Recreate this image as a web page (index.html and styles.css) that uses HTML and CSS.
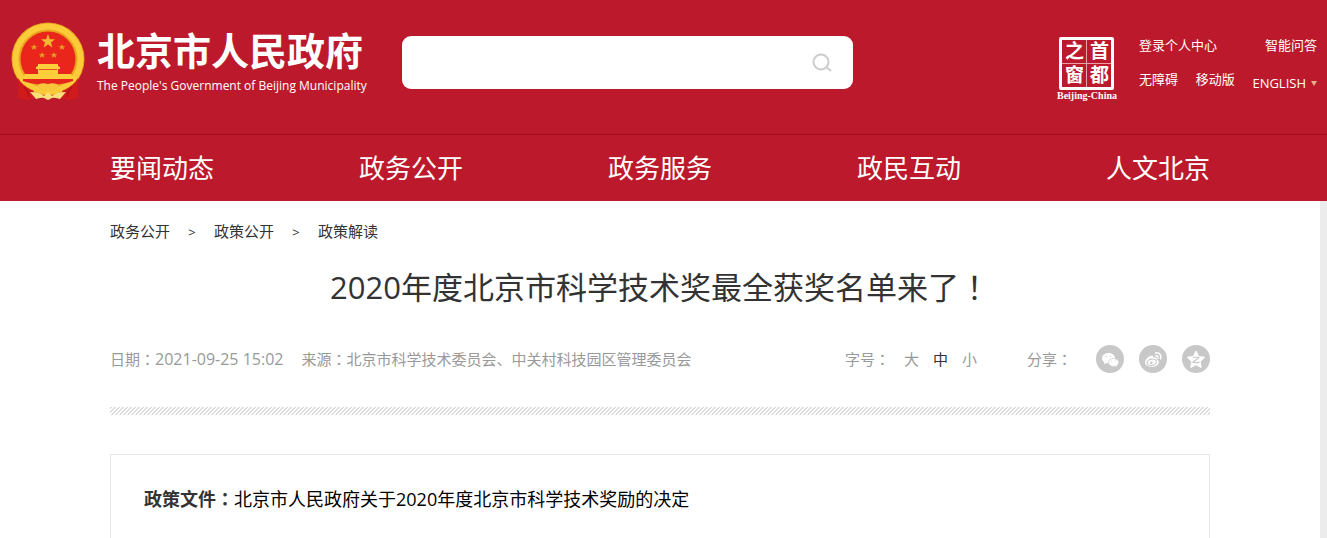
FILE: index.html
```html
<!DOCTYPE html>
<html lang="zh-CN">
<head>
    <meta charset="UTF-8">
    <meta name="viewport" content="width=device-width, initial-scale=1">
    <title>2020年度北京市科学技术奖最全获奖名单来了！</title>
    <link rel="stylesheet" href="styles.css">
</head>
<body>
    <header class="header">
        <div class="header-top">
            <a class="logo" href="#">
                <svg class="emblem" viewBox="0 0 76 80" aria-hidden="true">
                    <path d="M10 56 L9 75 Q16 80 23 76 L38 74 L53 76 Q60 80 67 75 L66 56Z" fill="#d01a1c"/>
                    <circle cx="38" cy="37" r="36.500" fill="#e9a51c"/>
                    <circle cx="38" cy="37" r="32.500" fill="none" stroke="#fbcb3a" stroke-width="6"/>
                    <circle cx="38" cy="37" r="27.500" fill="#e9251c"/>
                    <path d="M38 12 L39.800 17.200 L45 17.300 L41 20.500 L42.400 25.500 L38 22.500 L33.600 25.500 L35 20.500 L31 17.300 L36.200 17.200Z" fill="#f3b832"/>
                    <path d="M24 22l1 2.200h2.400l-1.900 1.500.7 2.300-2.200-1.400-2.200 1.400.7-2.300-1.900-1.500H23zM52 22l1 2.200h2.400l-1.900 1.500.7 2.300-2.200-1.400-2.200 1.400.7-2.300-1.900-1.500H51zM32 30l1 2.200h2.400l-1.900 1.500.7 2.300-2.200-1.400-2.200 1.400.7-2.300-1.900-1.500H31zM44 30l1 2.200h2.400l-1.900 1.500.7 2.300-2.200-1.400-2.200 1.400.7-2.300-1.900-1.500H43z" fill="#e89b2a"/>
                    <path d="M28 42h20v2l2 1v2h-2v5h13l2 5H13l2-5h13v-5h-2v-2l2-1z" fill="#ffcf3b"/>
                    <path d="M29 47.500h18" stroke="#e2531e"/>
                    <path d="M13 57h50v2q-8 3-14 3H27q-6 0-14-3z" fill="#e5271d"/>
                    <path d="M8 56q4 8 16 13l-3 7q-6 3-13-1zM68 56q-4 8-16 13l3 7q6 3 13-1z" fill="#d01a1c"/>
                    <path d="M27 63q5-3 11-1 6-2 11 1l-5 6H32z" fill="#f7c63a"/>
                    <path d="M20 70q10 0 14 4l4-4 4 4q4-4 14-4l-6 7q-7-2-8-1l-4 2-4-2q-1-1-8 1z" fill="#fbe07c"/>
                    <path d="M14 65q4 4 5 10M62 65q-4 4-5 10" fill="none" stroke="#b0141b" stroke-width="1.500"/>
                </svg>
                <span class="logo-text">
                    <strong class="logo-name">北京市人民政府</strong>
                    <span class="logo-en">The People's Government of Beijing Municipality</span>
                </span>
            </a>

            <form class="search">
                <input type="text" class="search-input" aria-label="搜索">
                <button type="submit" class="search-btn" aria-label="搜索">
                    <svg width="20" height="20" viewBox="0 0 20 20" fill="none" stroke="#cdcdcd" stroke-width="2">
                        <circle cx="9" cy="9" r="7.500"/>
                        <path d="M14 14l5 4"/>
                    </svg>
                </button>
            </form>

            <a class="seal" href="#">
                <span class="seal-grid"><span>之</span><span>首</span><span>窗</span><span>都</span></span>
                <span class="seal-en">Beijing-China</span>
            </a>

            <div class="top-links">
                <div class="link-row">
                    <a href="#">登录个人中心</a>
                    <a href="#">智能问答</a>
                </div>
                <div class="link-row">
                    <a href="#">无障碍</a>
                    <a href="#">移动版</a>
                    <button type="button" class="lang">ENGLISH <span class="arrow"></span></button>
                </div>
            </div>
        </div>

        <nav class="nav">
            <div class="wrap nav-list">
                <a href="#">要闻动态</a>
                <a href="#">政务公开</a>
                <a href="#">政务服务</a>
                <a href="#">政民互动</a>
                <a href="#">人文北京</a>
            </div>
        </nav>
    </header>

    <main class="main">
        <div class="wrap content">
            <div class="crumbs">
                <a href="#">政务公开</a><span>&gt;</span><a href="#">政策公开</a><span>&gt;</span><a href="#">政策解读</a>
            </div>

            <h1 class="title">2020年度北京市科学技术奖最全获奖名单来了<span class="mark" lang="zh-TW">！</span></h1>

            <div class="meta">
                <span class="date">日期<span class="mark" lang="zh-TW">：</span><time>2021-09-25 15:02</time></span>
                <span class="source">来源<span class="mark" lang="zh-TW">：</span>北京市科学技术委员会、中关村科技园区管理委员会</span>
                <div class="font-size">
                    <span>字号<span class="mark" lang="zh-TW">：</span></span>
                    <button type="button">大</button>
                    <button type="button" class="active">中</button>
                    <button type="button">小</button>
                </div>
                <div class="share">
                    <span class="share-label">分享<span class="mark" lang="zh-TW">：</span></span>
                    <a href="#" aria-label="微信">
                        <svg viewBox="0 0 28 28">
                            <circle cx="14" cy="14" r="14" fill="#c8c8c8"/>
                            <path d="M12.500 8C8.700 8 6 10.300 6 13.200c0 1.700.9 3 2.400 4l-.6 2.100 2.400-1.300q1.100.3 2.300.3C16.300 18.300 19 16 19 13.200S16.300 8 12.500 8z" fill="#fff"/>
                            <path d="M17.500 13.500c-3 0-5 1.700-5 4s2.200 4 5 4q1 0 1.900-.3l2 1.100-.5-1.700q1.900-1.300 1.900-3.100c0-2.300-2.300-4-5.300-4z" fill="#fff" stroke="#c8c8c8" stroke-width=".7"/>
                            <path d="M10 11.500h.8M14 11.500h.8M15.500 16h.6M19 16h.6" stroke="#c8c8c8" stroke-width="1.200"/>
                        </svg>
                    </a>
                    <a href="#" aria-label="微博">
                        <svg viewBox="0 0 28 28">
                            <circle cx="14" cy="14" r="14" fill="#c8c8c8"/>
                            <path d="M6 17.500c0-3 4-7 6.800-7 1.400 0 1.600 1 1.200 2.200 2.200-.8 4-.3 3.500 1.700 4.800 1.400 1.900 7.400-4.700 7.400C9 21.800 6 20 6 17.500z" fill="#fff"/>
                            <ellipse cx="12.800" cy="17.300" rx="4.700" ry="3.200" fill="none" stroke="#c8c8c8" stroke-width="1.100" transform="rotate(-8 12.800 17.300)"/>
                            <circle cx="12.300" cy="17.700" r="1.300" fill="#c8c8c8"/>
                            <path d="M16.500 7.900c3.800-.9 6.400 2.500 5.100 5.900M16.800 10.700c1.700-.3 2.700 1 2.100 2.600" fill="none" stroke="#fff" stroke-width="1.500" stroke-linecap="round"/>
                        </svg>
                    </a>
                    <a href="#" aria-label="QQ空间">
                        <svg viewBox="0 0 28 28">
                            <circle cx="14" cy="14" r="14" fill="#c8c8c8"/>
                            <path d="M14 6l2.600 5.400 6 .9-4.300 4.200.9 6L14 19.800l-5.200 2.700.9-6-4.300-4.200 6-.9z" fill="#fff" stroke="#fff" stroke-linejoin="round"/>
                            <path d="M11 12.500q3-1 6 0l-6 4.700q3.500.8 6.500-.1" fill="none" stroke="#c8c8c8" stroke-width="1.200"/>
                        </svg>
                    </a>
                </div>
            </div>

            <div class="stripes"></div>

            <div class="policy">
                <strong>政策文件<span class="mark" lang="zh-TW">：</span></strong><a href="#">北京市人民政府关于2020年度北京市科学技术奖励的决定</a>
            </div>
        </div>
    </main>
</body>
</html>
```

FILE: styles.css
```css
* {
    box-sizing: border-box;
}
body {
    margin: 0;
    min-height: 100vh;
    display: flex;
    flex-direction: column;
    font-family: "Open Sans", "Noto Sans CJK SC", sans-serif;
    font-size: 15px;
    line-height: 24px;
    color: #333;
    background: #fff;
}
a {
    color: inherit;
    text-decoration: none;
}
button {
    padding: 0;
    border: none;
    background: none;
    font: inherit;
    color: inherit;
    cursor: pointer;
}
.wrap {
    width: 100%;
    max-width: 1100px;
    margin: 0 auto;
}
/* centred punctuation */
.mark {
    font-family: "Noto Sans CJK TC", sans-serif;
    line-height: 1;
}

/* header */
.header {
    color: #fff;
    background: #bc1a2c;
}
.header-top {
    display: flex;
    align-items: flex-start;
    height: 135px;
    padding: 22px 10px 0;
    border-bottom: 1px solid #a01020;
}
.logo {
    display: flex;
    gap: 11px;
}
.emblem {
    width: 76px;
    height: 80px;
}
.logo-text {
    display: flex;
    flex-direction: column;
    padding-top: 6px;
    white-space: nowrap;
}
.logo-name {
    font-size: 38px;
    line-height: 44px;
}
.logo-en {
    font-size: 12px;
    line-height: 28px;
}
.search {
    display: flex;
    width: 451px;
    height: 53px;
    margin-top: 14px;
    margin-left: 35px;
    border-radius: 9px;
    background: #fff;
}
.search-input {
    flex: 1;
    min-width: 0;
    padding: 0 16px;
    border: none;
    outline: none;
    font: inherit;
    background: none;
}
.search-btn {
    display: flex;
    align-items: center;
    justify-content: center;
    width: 62px;
}
.seal {
    display: flex;
    flex-direction: column;
    align-items: center;
    margin-top: 15px;
    margin-left: auto;
}
.seal-grid {
    display: grid;
    grid-template-columns: 1fr 1fr;
    gap: 1px;
    width: 55px;
    height: 53px;
    border: 3px solid #fff;
    border-radius: 2px;
    background: #e8a0a8;
    font-size: 19px;
    font-weight: bold;
    line-height: 23px;
    text-align: center;
}
.seal-grid span {
    background: #bc1a2c;
}
.seal-en {
    font-family: "Liberation Serif", serif;
    font-size: 10px;
    font-weight: bold;
    line-height: 12px;
}
.top-links {
    width: 178px;
    margin-top: 11px;
    margin-left: 22px;
    font-size: 13px;
}
.link-row {
    display: flex;
    justify-content: space-between;
    margin-bottom: 10px;
    white-space: nowrap;
}
.lang {
    display: flex;
    align-items: center;
    gap: 5px;
    padding-top: 4px;
}
.arrow {
    border: 3px solid transparent;
    border-top: 5px solid #e9b08c;
    border-bottom: none;
}

/* nav */
.nav {
    padding-right: 7px;
}
.nav-list {
    display: flex;
    justify-content: space-between;
    font-size: 26px;
    line-height: 66px;
}

/* article */
.main {
    flex: 1;
    display: flex;
    border-right: 7px solid #ececec;
}
.content {
    display: flex;
    flex-direction: column;
}
.crumbs {
    padding-top: 18px;
}
.crumbs span {
    display: inline-block;
    width: 44px;
    text-align: center;
    font-size: 13px;
}
.title {
    margin: 21px 0 0;
    font-size: 31px;
    font-weight: normal;
    line-height: 44px;
    text-align: center;
}
.meta {
    display: flex;
    align-items: center;
    margin-top: 36px;
    color: #999;
}
.meta time {
    font-size: 16px;
}
.source {
    margin-left: 18px;
}
.font-size {
    display: flex;
    gap: 14px;
    margin-left: auto;
}
.font-size .active {
    color: #333;
}
.share {
    display: flex;
    align-items: center;
    gap: 15px;
    margin-left: 50px;
}
.share-label {
    margin-right: 9px;
}
.share svg {
    display: block;
    width: 28px;
    height: 28px;
}
.stripes {
    height: 8px;
    margin-top: 34px;
    background: linear-gradient(135deg, #ddd 25%, #fff 25% 50%, #ddd 50% 75%, #fff 75%) 0 0 / 4px 4px;
}
.policy {
    flex: 1;
    margin-top: 39px;
    padding: 32px 33px;
    border: 1px solid #e6e6e6;
    border-bottom: none;
    font-size: 18px;
}
.policy a {
    color: #000;
}
```
